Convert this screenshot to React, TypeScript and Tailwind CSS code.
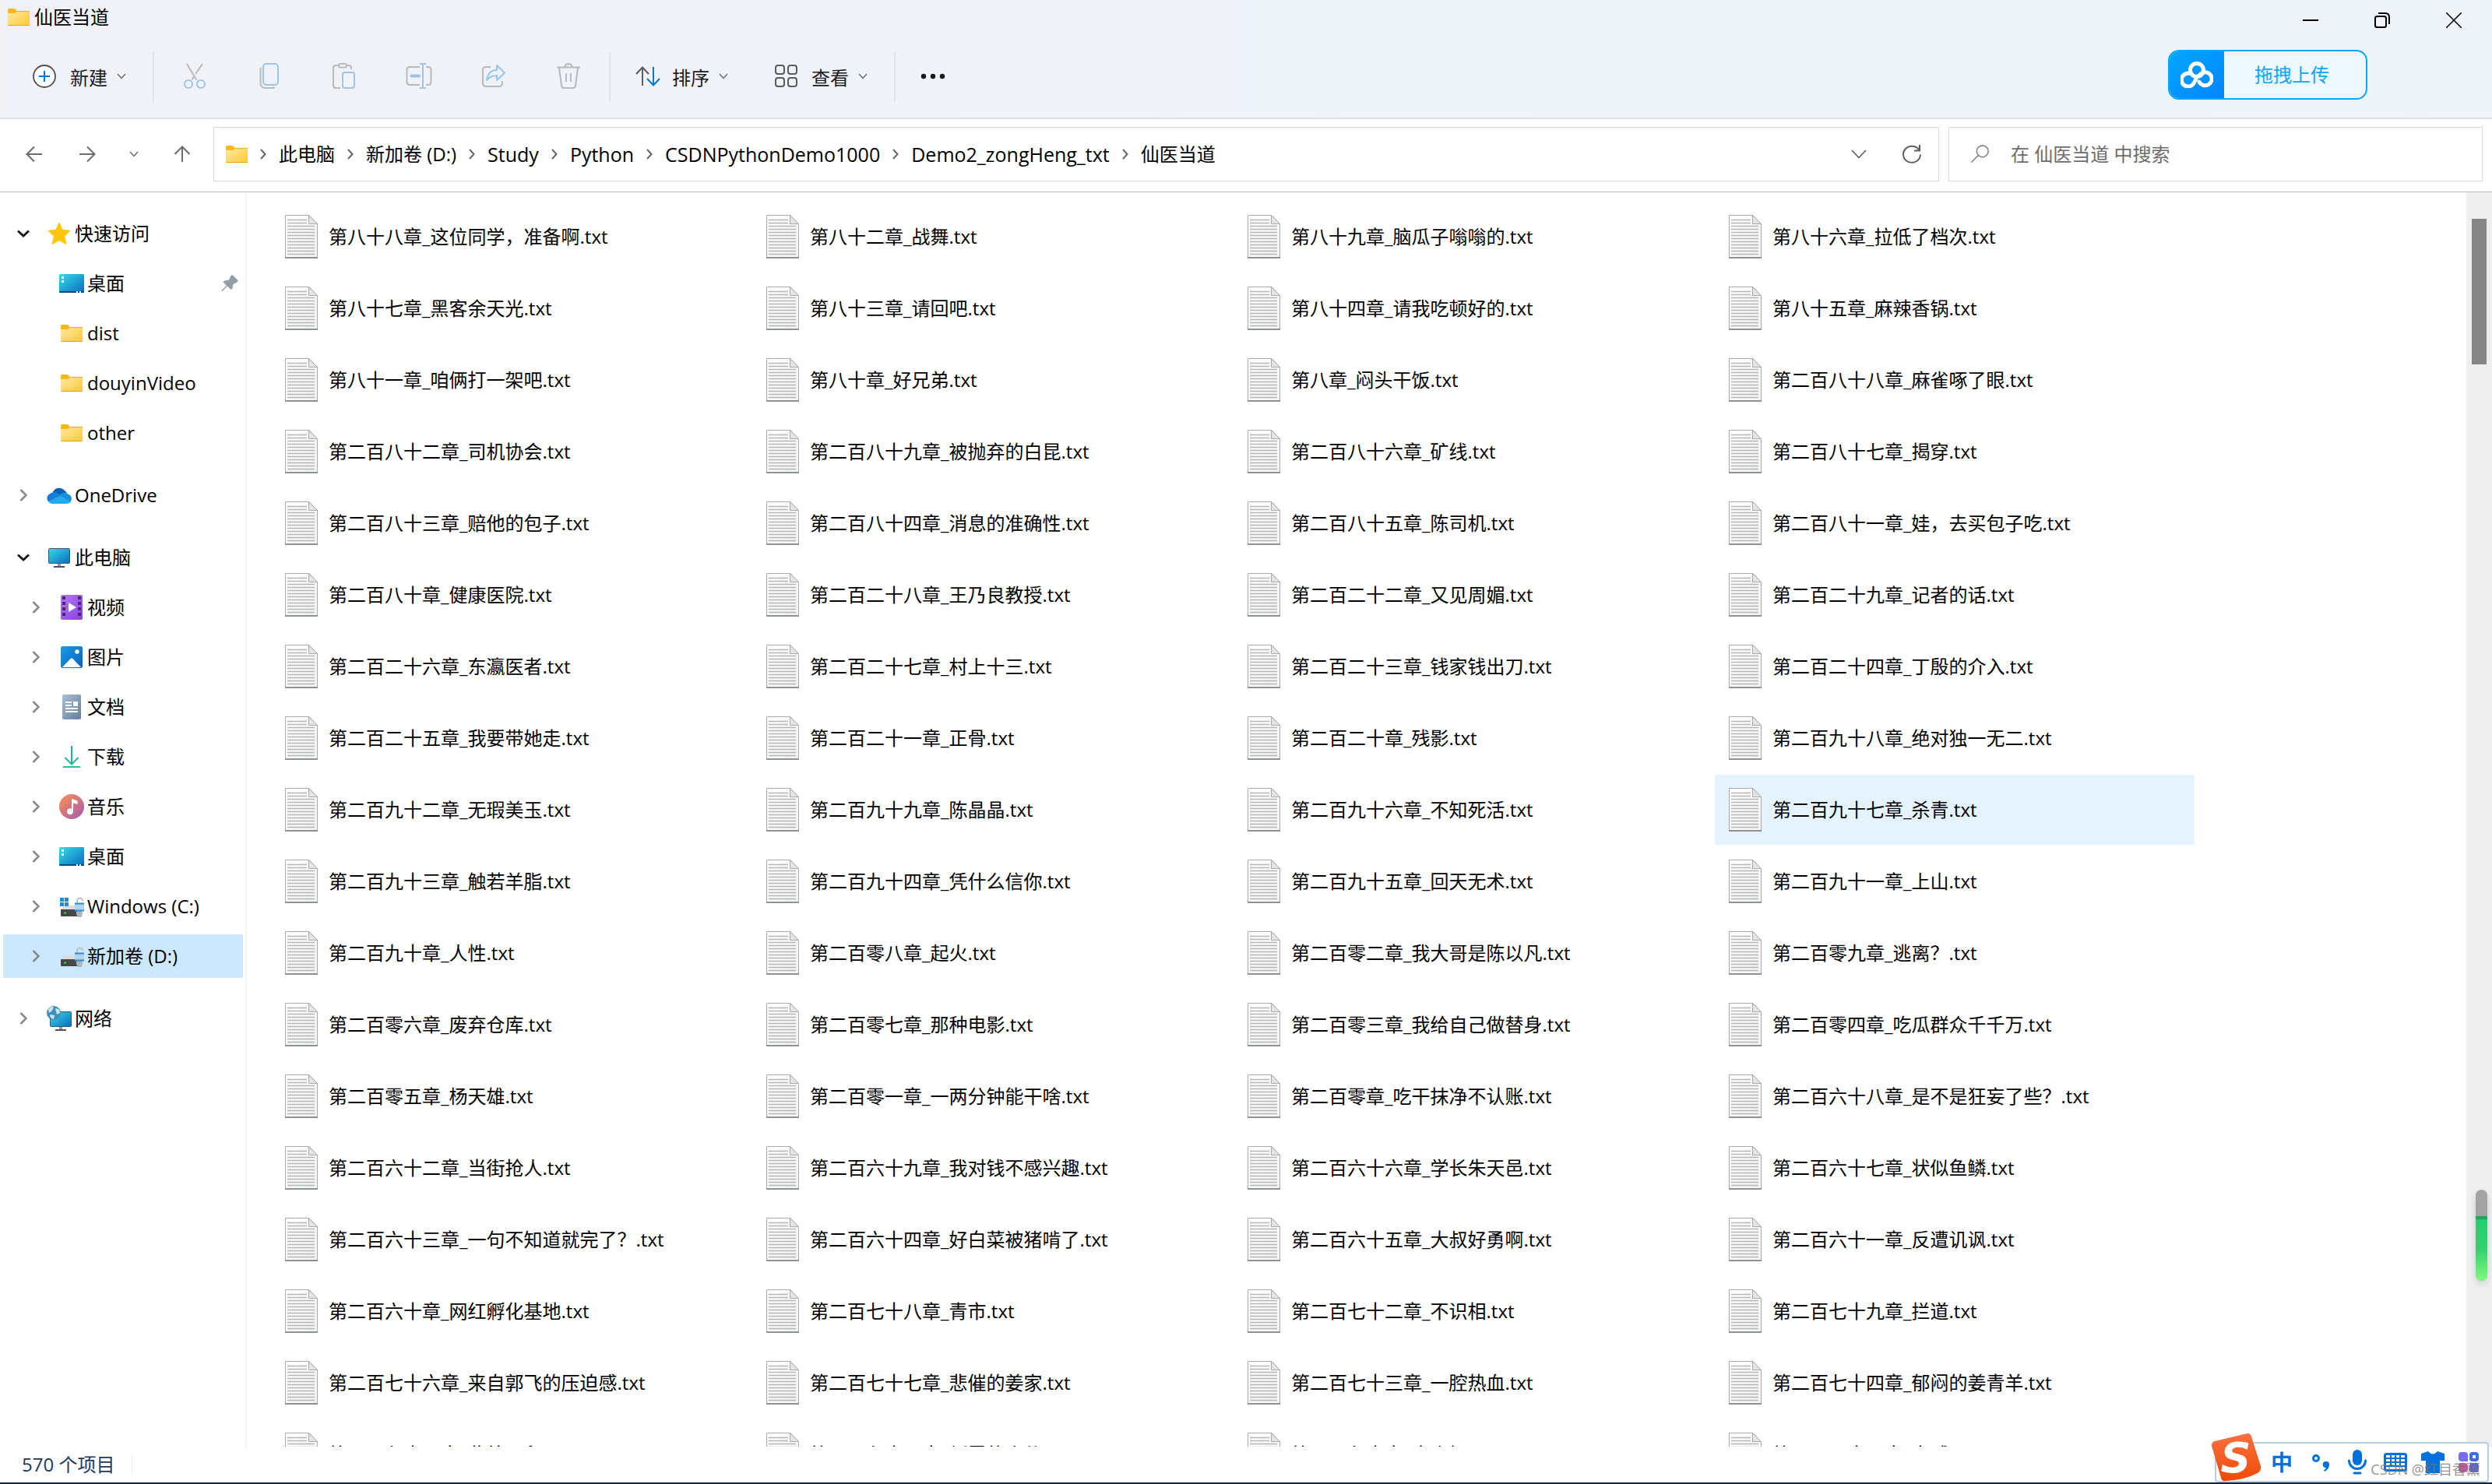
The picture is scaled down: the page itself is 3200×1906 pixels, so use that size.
import React from "react";

type IconProps = { className?: string };

const quickAccess = ["dist", "douyinVideo", "other"];

const crumbs = ["此电脑", "新加卷 (D:)", "Study", "Python", "CSDNPythonDemo1000", "Demo2_zongHeng_txt", "仙医当道"];

const hoveredFile = "第二百九十七章_杀青";

// four names per line, in the order the folder lists them
const files = [
  "第八十八章_这位同学，准备啊", "第八十二章_战舞", "第八十九章_脑瓜子嗡嗡的", "第八十六章_拉低了档次",
  "第八十七章_黑客余天光", "第八十三章_请回吧", "第八十四章_请我吃顿好的", "第八十五章_麻辣香锅",
  "第八十一章_咱俩打一架吧", "第八十章_好兄弟", "第八章_闷头干饭", "第二百八十八章_麻雀啄了眼",
  "第二百八十二章_司机协会", "第二百八十九章_被抛弃的白昆", "第二百八十六章_矿线", "第二百八十七章_揭穿",
  "第二百八十三章_赔他的包子", "第二百八十四章_消息的准确性", "第二百八十五章_陈司机", "第二百八十一章_娃，去买包子吃",
  "第二百八十章_健康医院", "第二百二十八章_王乃良教授", "第二百二十二章_又见周媚", "第二百二十九章_记者的话",
  "第二百二十六章_东瀛医者", "第二百二十七章_村上十三", "第二百二十三章_钱家钱出刀", "第二百二十四章_丁殷的介入",
  "第二百二十五章_我要带她走", "第二百二十一章_正骨", "第二百二十章_残影", "第二百九十八章_绝对独一无二",
  "第二百九十二章_无瑕美玉", "第二百九十九章_陈晶晶", "第二百九十六章_不知死活", "第二百九十七章_杀青",
  "第二百九十三章_触若羊脂", "第二百九十四章_凭什么信你", "第二百九十五章_回天无术", "第二百九十一章_上山",
  "第二百九十章_人性", "第二百零八章_起火", "第二百零二章_我大哥是陈以凡", "第二百零九章_逃离？",
  "第二百零六章_废弃仓库", "第二百零七章_那种电影", "第二百零三章_我给自己做替身", "第二百零四章_吃瓜群众千千万",
  "第二百零五章_杨天雄", "第二百零一章_一两分钟能干啥", "第二百零章_吃干抹净不认账", "第二百六十八章_是不是狂妄了些？",
  "第二百六十二章_当街抢人", "第二百六十九章_我对钱不感兴趣", "第二百六十六章_学长朱天邑", "第二百六十七章_状似鱼鳞",
  "第二百六十三章_一句不知道就完了？", "第二百六十四章_好白菜被猪啃了", "第二百六十五章_大叔好勇啊", "第二百六十一章_反遭讥讽",
  "第二百六十章_网红孵化基地", "第二百七十八章_青市", "第二百七十二章_不识相", "第二百七十九章_拦道",
  "第二百七十六章_来自郭飞的压迫感", "第二百七十七章_悲催的姜家", "第二百七十三章_一腔热血", "第二百七十四章_郁闷的姜青羊",
  "第二百七十五章_此处不留", "第二百七十一章_倒霉的小伙", "第二百七十章_大小姐", "第二百五十八章_立威",
];

const FolderIcon = ({ className = "" }: IconProps) => (
  <svg className={className} width="28" height="22" viewBox="0 0 28 22" aria-hidden="true">
    <defs>
      <linearGradient id="folder" x1="0" y1="0" x2="1" y2="1">
        <stop offset="0" stopColor="#ffe9a2" />
        <stop offset="1" stopColor="#ffc937" />
      </linearGradient>
    </defs>
    <path d="M0 1.500Q0 0 1.500 0H8.500L12 3V7H0Z" fill="#fbb815" />
    <path d="M0 6H9L12 3H27Q28 3 28 4V21Q28 22 27 22H1Q0 22 0 21Z" fill="url(#folder)" />
    <path d="M0 21H28V21Q28 22 27 22H1Q0 22 0 21Z" fill="#eba51d" />
    <path d="M12 3.500H28" stroke="#f0b030" />
  </svg>
);

const TextFileIcon = () => (
  <svg className="shrink-0" width="42" height="56" viewBox="0 0 42 56" aria-hidden="true">
    <defs>
      <linearGradient id="sheet" x1="0" y1="0" x2="1" y2="1">
        <stop offset="0" stopColor="#ffffff" />
        <stop offset="1" stopColor="#f1f2f3" />
      </linearGradient>
    </defs>
    <path d="M.5.5H31L41.500 11.500V55.500H.5Z" fill="url(#sheet)" stroke="#a9abac" />
    <path d="M30.500.5V11.500H41.500Z" fill="#e3e4e4" stroke="#a9abac" />
    <path d="M0 55H42" stroke="#8f9293" strokeWidth="2" />
    <path d="M3 6.500H28M3 10.500H28M3 14.500H38M3 18.500H38M3 22.500H38M3 26.500H38M3 30.500H38M3 34.500H38M3 38.500H38M3 42.500H38M3 46.500H38M3 50.500H38" stroke="#b3b5b6" strokeWidth="1.300" />
  </svg>
);

const DesktopIcon = () => (
  <svg width="32" height="24" viewBox="0 0 32 24" aria-hidden="true">
    <defs>
      <linearGradient id="screen" x1="0" y1="0" x2="1" y2="1">
        <stop offset="0" stopColor="#35dbe6" />
        <stop offset="1" stopColor="#0a6cc0" />
      </linearGradient>
    </defs>
    <rect width="32" height="24" rx="1.500" fill="url(#screen)" />
    <path d="M0 22H32V22.500Q32 24 30.500 24H1.500Q0 24 0 22.500Z" fill="#0c4a7c" />
    <path d="M3 3H6V6H3ZM3 8H6V11H3ZM22 22H24V24H22ZM26 22H28V24H26Z" fill="#fff" />
  </svg>
);

const StarIcon = () => (
  <svg width="30" height="30" viewBox="0 0 30 30" aria-hidden="true">
    <path d="M15 1.500L19 10.500L28.500 11.500L21.300 18L23.500 28L15 23L6.500 28L8.700 18L1.500 11.500L11 10.500Z" fill="#fec60a" stroke="#fec60a" strokeWidth="1.500" strokeLinejoin="round" />
  </svg>
);

const PinIcon = () => (
  <svg className="ml-auto" width="22" height="22" viewBox="0 0 22 22" aria-hidden="true">
    <path d="M12.500 1Q14 0 15.500 1L21 6.500Q22 8 20.500 9.500L15.500 12L14.500 17.500L12.500 19L8 14.500L1.500 21H.5V20L7 13.500L2.500 9.500L4.500 7.500L10 6.500Z" fill="#939fa7" />
  </svg>
);

const OneDriveIcon = () => (
  <svg width="32" height="21" viewBox="0 0 32 21" aria-hidden="true">
    <path d="M7 8C9 1 17-2 23 4L26 7L15 14Z" fill="#0a61b5" />
    <path d="M7 7C11 5 14 7 17 9L22 13L6 20C-2 19-1 8 7 7Z" fill="#0f7fd8" />
    <path d="M17 9.500C20 6 25 6 27 8.500C34 10 33 20 27 20.500Z" fill="#1490df" />
    <path d="M2.500 18L17 10.500L30.500 18Q29 21 25 21H7Q4 21 2.500 18Z" fill="#28a8ea" />
  </svg>
);

const PcIcon = () => (
  <svg width="28" height="25" viewBox="0 0 28 25" aria-hidden="true">
    <path d="M12 19H16V23H12Z" fill="#8f979e" />
    <path d="M7 23H21V25H7Z" fill="#4b545c" />
    <rect x=".5" y=".5" width="27" height="19" rx="1" fill="url(#screen)" stroke="#3f5967" />
  </svg>
);

const VideoIcon = () => (
  <svg width="28" height="32" viewBox="0 0 28 32" aria-hidden="true">
    <defs>
      <linearGradient id="film" x1="0" y1="0" x2="1" y2="1">
        <stop offset="0" stopColor="#b07af5" />
        <stop offset="1" stopColor="#8a3fe0" />
      </linearGradient>
    </defs>
    <rect width="28" height="32" rx="2" fill="url(#film)" />
    <path d="M4 2V30M24 2V30" stroke="#4b2477" strokeWidth="4" strokeDasharray="4 3" />
    <path d="M10 10V22L20 16Z" fill="#fff" />
  </svg>
);

const PictureIcon = () => (
  <svg width="28" height="28" viewBox="0 0 28 28" aria-hidden="true">
    <defs>
      <linearGradient id="sky" x1="0" y1="0" x2="1" y2="1">
        <stop offset="0" stopColor="#1c9be8" />
        <stop offset="1" stopColor="#0b62b8" />
      </linearGradient>
    </defs>
    <rect width="28" height="28" rx="2.500" fill="url(#sky)" />
    <path d="M2 27L12.500 16Q14 14.500 15.500 16L26 27Z" fill="#f3f9fe" />
    <circle cx="21" cy="7" r="2.700" fill="#fff" />
  </svg>
);

const DocumentIcon = () => (
  <svg width="24" height="32" viewBox="0 0 24 32" aria-hidden="true">
    <defs>
      <linearGradient id="doc" x1="0" y1="0" x2="1" y2="1">
        <stop offset="0" stopColor="#a9bfd3" />
        <stop offset="1" stopColor="#647f9e" />
      </linearGradient>
    </defs>
    <rect width="24" height="32" rx="2" fill="url(#doc)" />
    <path d="M4 10H12M4 14H12M4 18H20M4 22H20" stroke="#fff" strokeWidth="2" />
    <path d="M14 9H20V15H14Z" fill="#fff" />
  </svg>
);

const DownloadIcon = () => (
  <svg width="22" height="28" viewBox="0 0 22 28" fill="none" aria-hidden="true">
    <path d="M11 0V23M2.500 15L11 23.500L19.500 15" stroke="#1fb598" strokeWidth="2" />
    <path d="M0 27H22" stroke="#2fc08f" strokeWidth="2" />
  </svg>
);

const MusicIcon = () => (
  <svg width="32" height="32" viewBox="0 0 32 32" aria-hidden="true">
    <defs>
      <linearGradient id="disc" x1="0" y1="0" x2="1" y2="1">
        <stop offset=".1" stopColor="#f58b57" />
        <stop offset="1" stopColor="#a25bb5" />
      </linearGradient>
    </defs>
    <circle cx="16" cy="16" r="16" fill="url(#disc)" />
    <path d="M16 6L23.500 8.500V13L18 11.500V22A4 4 0 1 1 16 18.800Z" fill="#fff" />
  </svg>
);

const DriveIcon = ({ system = false }: { system?: boolean }) => (
  <svg width="32" height="32" viewBox="0 0 32 32" aria-hidden="true">
    <path d="M7 15H25L30 20H2Z" fill="#dcdcdc" />
    <path d="M2 20H29V28Q29 29 28 29H3Q2 29 2 28Z" fill="#474747" />
    <circle cx="7.500" cy="24.500" r="1.300" fill="#42e03b" />
    {system && <path d="M1 5H6V10H1ZM7 5H12V10H7ZM1 11H6V16H1ZM7 11H12V16H7Z" fill="#1a8fe0" />}
    <path d="M23 13V9A3.500 3.500 0 0 1 30 9" fill="none" stroke="#b9c3ca" strokeWidth="2.200" />
    <path d="M20 13H32V22H20Z" fill="#aed3ee" />
    <path d="M20 12.500H32M20 21.500H32" stroke="#2b8fdb" strokeWidth="2" />
    <path d="M22 22.500H30V26L28 30H24L22 26Z" fill="#aab4bb" />
  </svg>
);

const NetworkIcon = () => (
  <svg width="32" height="32" viewBox="0 0 32 32" aria-hidden="true">
    <path d="M16 26H20V30H16Z" fill="#8f979e" />
    <path d="M11 30H25V32H11Z" fill="#4b545c" />
    <rect x="4.500" y="7.500" width="27" height="19" rx="1" fill="url(#screen)" stroke="#3f5967" />
    <circle cx="9" cy="9" r="9" fill="#3d8fbe" />
    <path d="M2 4Q7-1 9 2L6 7L3 9ZM11 3Q17 3 17 9L13 11L12 7ZM4 11L10 12L9 17Q4 16 4 11Z" fill="#cfe5f0" />
  </svg>
);

const ArrowIcon = ({ className = "" }: IconProps) => (
  <svg className={className} width="24" height="24" viewBox="0 0 24 24" fill="none" stroke="#6b6b6b" strokeWidth="2" aria-hidden="true">
    <path d="M22 12H3M12 2.500L2.500 12L12 21.500" />
  </svg>
);

const SmallChevron = () => (
  <svg width="12" height="8" viewBox="0 0 12 8" fill="none" stroke="#666" strokeWidth="1.300" aria-hidden="true">
    <path d="M1 1L6 6.500L11 1" />
  </svg>
);

const CrumbChevron = () => (
  <svg width="8" height="14" viewBox="0 0 8 14" fill="none" stroke="#666" strokeWidth="2" aria-hidden="true">
    <path d="M1 1L6.500 7L1 13" />
  </svg>
);

const TreeChevron = ({ open = false }: { open?: boolean }) =>
  open ? (
    <svg width="16" height="10" viewBox="0 0 16 10" fill="none" stroke="#1a1a1a" strokeWidth="2.800" aria-hidden="true">
      <path d="M1 1.500L8 8L15 1.500" />
    </svg>
  ) : (
    <svg width="10" height="16" viewBox="0 0 10 16" fill="none" stroke="#8a8a8a" strokeWidth="2.600" aria-hidden="true">
      <path d="M1.500 1L8.500 8L1.500 15" />
    </svg>
  );

const Separator = ({ className = "" }: IconProps) => <div className={`h-16 w-0.5 bg-[#e1e4e9] ${className}`} />;

const toolIcons = [
  {
    label: "剪切",
    icon: (
      <>
        <path d="M6 1L18.500 22M26 1L17 14M15 17L12.500 21.500" />
        <g stroke="#98c6ec">
          <circle cx="8" cy="27" r="5" />
          <circle cx="24" cy="27" r="5" />
        </g>
      </>
    ),
  },
  {
    label: "复制",
    icon: (
      <>
        <path d="M5 6Q4.500 7 4.500 9V25Q4.500 32 11 32H19Q21.500 32 22.500 31" />
        <rect x="8" y="1" width="19" height="27" rx="4" stroke="#98c6ec" />
      </>
    ),
  },
  {
    label: "粘贴",
    icon: (
      <>
        <path d="M9 3H5Q2 3 2 6V29Q2 32 5 32H11M19 3H22Q25 3 25 6V8" />
        <rect x="9" y="1" width="10" height="4.500" rx="2" />
        <rect x="14" y="12" width="15" height="20" rx="3" stroke="#98c6ec" />
      </>
    ),
  },
  {
    label: "重命名",
    icon: (
      <>
        <path d="M17 5H4Q0.500 5 0.500 9V24Q0.500 28 4 28H17M25 5H28Q31.500 5 31.500 9V24Q31.500 28 28 28H25" />
        <path d="M17 1H25M21 1V32M17 32H25" stroke="#98c6ec" />
        <path d="M6.500 16.500H16" stroke="#98c6ec" strokeWidth="4" strokeLinecap="round" />
      </>
    ),
  },
  {
    label: "共享",
    icon: (
      <>
        <path d="M12 5H6Q2 5 2 9V26Q2 30 6 30H23Q27 30 27 26V23" />
        <path d="M7 22Q9 9 20 9V3L30 12.500L20 22V16Q12 16 7 22Z" stroke="#98c6ec" strokeLinejoin="round" />
      </>
    ),
  },
  {
    label: "删除",
    icon: (
      <path d="M1 5.500H31M11 5.500Q12 1 16 1T21 5.500M4 5.500L7 29Q7.500 32 10 32H22Q24.500 32 25 29L28 5.500M13 13V24M19 13V24" />
    ),
  },
];

type TreeRowProps = {
  icon: React.ReactNode;
  label: string;
  level?: number;
  state?: "open" | "closed" | "none";
  pinned?: boolean;
  selected?: boolean;
};

const TreeRow = ({ icon, label, level = 1, state = "none", pinned, selected }: TreeRowProps) => (
  <button
    className={`flex h-14 w-full items-center rounded-xs pr-[6px] text-left whitespace-nowrap ${
      level === 1 ? "pl-4" : "pl-8"
    } ${selected ? "bg-[#cce8ff]" : ""}`}
  >
    <span className="flex w-5 shrink-0 justify-center">{state !== "none" && <TreeChevron open={state === "open"} />}</span>
    <span className="ml-5 flex w-8 shrink-0 justify-center">{icon}</span>
    <span className="ml-1">{label}</span>
    {pinned && <PinIcon />}
  </button>
);

const Sidebar = () => (
  <nav className="flex w-[317px] shrink-0 flex-col gap-6 border-r-2 border-[#f5f5f5] pt-[25px] pr-[3px] pl-1">
    <div className="flex flex-col gap-2">
      <TreeRow icon={<StarIcon />} label="快速访问" state="open" />
      <TreeRow icon={<DesktopIcon />} label="桌面" level={2} pinned />
      {quickAccess.map((name) => (
        <TreeRow key={name} icon={<FolderIcon />} label={name} level={2} />
      ))}
    </div>
    <TreeRow icon={<OneDriveIcon />} label="OneDrive" state="closed" />
    <div className="flex flex-col gap-2">
      <TreeRow icon={<PcIcon />} label="此电脑" state="open" />
      <TreeRow icon={<VideoIcon />} label="视频" level={2} state="closed" />
      <TreeRow icon={<PictureIcon />} label="图片" level={2} state="closed" />
      <TreeRow icon={<DocumentIcon />} label="文档" level={2} state="closed" />
      <TreeRow icon={<DownloadIcon />} label="下载" level={2} state="closed" />
      <TreeRow icon={<MusicIcon />} label="音乐" level={2} state="closed" />
      <TreeRow icon={<DesktopIcon />} label="桌面" level={2} state="closed" />
      <TreeRow icon={<DriveIcon system />} label="Windows (C:)" level={2} state="closed" />
      <TreeRow icon={<DriveIcon />} label="新加卷 (D:)" level={2} state="closed" selected />
    </div>
    <TreeRow icon={<NetworkIcon />} label="网络" state="closed" />
  </nav>
);

const Header = () => (
  <header className="border-b-2 border-[#dcdfe5] bg-linear-to-r from-[#f1f2f7] via-[#eff3fb] to-[#eef4f9]">
    {/* Title bar */}
    <div className="flex h-12 items-center pb-1 pl-[10px]">
      <FolderIcon />
      <h1 className="ml-[6px]">仙医当道</h1>
      <div className="ml-auto flex h-full pt-2 pr-[3px]">
        <button aria-label="最小化" className="flex w-[92px] items-center justify-center">
          <svg width="20" height="20" viewBox="0 0 20 20"><path d="M0 10H20" stroke="#000" strokeWidth="2" /></svg>
        </button>
        <button aria-label="还原" className="flex w-[92px] items-center justify-center">
          <svg width="20" height="20" viewBox="0 0 20 20" fill="none" stroke="#000" strokeWidth="2">
            <rect x="1" y="5" width="14" height="14" rx="2.500" />
            <path d="M5 1H14Q19 1 19 6V15" />
          </svg>
        </button>
        <button aria-label="关闭" className="flex w-[92px] items-center justify-center">
          <svg width="20" height="20" viewBox="0 0 20 20"><path d="M0 0L20 20M20 0L0 20" stroke="#000" strokeWidth="1.500" /></svg>
        </button>
      </div>
    </div>

    {/* Toolbar */}
    <div className="flex h-[103px] items-center pb-1 pl-[42px] text-[#1b1b1b]">
      <button className="flex items-center">
        <svg width="30" height="30" viewBox="0 0 30 30" fill="none">
          <circle cx="15" cy="15" r="14" fill="#fafbfc" stroke="#505050" strokeWidth="1.800" />
          <path d="M15 8V22M8 15H22" stroke="#0078d4" strokeWidth="2" />
        </svg>
        <span className="mr-3 ml-[18px] pt-1">新建</span>
        <SmallChevron />
      </button>
      <Separator className="mr-1 ml-[34px]" />
      {toolIcons.map((tool) => (
        <button key={tool.label} aria-label={tool.label} className="flex w-24 justify-center">
          <svg className="overflow-visible" width="32" height="33" viewBox="0 0 32 33" fill="none" stroke="#b9babd" strokeWidth="2">
            {tool.icon}
          </svg>
        </button>
      ))}
      <Separator className="mr-8 ml-1" />
      <button className="flex items-center">
        <svg width="32" height="26" viewBox="0 0 32 26" fill="none" strokeWidth="2">
          <path d="M9 25V2M1 10L9 1.500L17 10" stroke="#5c5c5c" />
          <path d="M23 1V24M15 16L23 24.500L31 16" stroke="#0078d4" />
        </svg>
        <span className="mr-3 ml-[15px] pt-1">排序</span>
        <SmallChevron />
      </button>
      <button className="ml-[60px] flex items-center">
        <svg width="29" height="29" viewBox="0 0 29 29" fill="none" stroke="#5c5c5c" strokeWidth="2">
          <rect x="1" y="1" width="11" height="11" rx="3" />
          <rect x="17" y="1" width="11" height="11" rx="3" />
          <rect x="1" y="17" width="11" height="11" rx="3" />
          <rect x="17" y="17" width="11" height="11" rx="3" />
        </svg>
        <span className="mr-3 ml-[18px] pt-1">查看</span>
        <SmallChevron />
      </button>
      <Separator className="mr-8 ml-[34px]" />
      <button aria-label="更多">
        <svg width="32" height="8" viewBox="0 0 32 8" fill="#1b1b1b">
          <circle cx="4" cy="4" r="3.200" />
          <circle cx="16" cy="4" r="3.200" />
          <circle cx="28" cy="4" r="3.200" />
        </svg>
      </button>

      <button className="mr-40 mb-1 ml-auto flex h-16 w-64 items-center overflow-hidden rounded-[14px] border-2 border-[#06a7ff] bg-[#eef8ff] text-[#06a7ff]">
        <span className="flex h-full w-[70px] items-center justify-center bg-linear-to-br from-[#06a7ff] to-[#0683ff]">
          <svg width="42" height="34" viewBox="0 0 42 34" fill="none" stroke="#fff" strokeWidth="5">
            <circle cx="21" cy="11" r="8.500" />
            <path d="M21 20L17 28A8.500 8.500 0 1 1 14.500 16.500M21 20L25 17A8.500 8.500 0 1 1 24 26" strokeLinecap="round" />
          </svg>
        </span>
        <span className="flex-1 pr-2 text-center">拖拽上传</span>
      </button>
    </div>
  </header>
);

const AddressRow = () => (
  <div className="flex h-[94px] items-center border-b border-[#bfbfbf] pr-3 pb-1 pl-8">
    <button aria-label="后退"><ArrowIcon /></button>
    <button aria-label="前进" className="ml-11"><ArrowIcon className="rotate-180" /></button>
    <button aria-label="最近浏览的位置" className="ml-[42px]"><SmallChevron /></button>
    <button aria-label="上移" className="ml-11"><ArrowIcon className="rotate-90" /></button>

    <div className="ml-7 flex h-[70px] min-w-0 flex-1 items-center border border-[#d9d9d9] pr-[22px] pl-[15px] whitespace-nowrap">
      <FolderIcon />
      <ol className="flex items-center">
        {crumbs.map((crumb) => (
          <li key={crumb} className="ml-4 flex items-center gap-4">
            <CrumbChevron />
            <a href="#" className={/^[\x20-\x7e]+$/.test(crumb) ? "text-[25px] leading-8" : ""}>
              {crumb}
            </a>
          </li>
        ))}
      </ol>
      <button aria-label="以前的位置" className="ml-auto">
        <svg width="20" height="12" viewBox="0 0 20 12" fill="none" stroke="#666" strokeWidth="1.800"><path d="M1 1L10 10.500L19 1" /></svg>
      </button>
      <button aria-label="刷新" className="ml-[46px]">
        <svg width="24" height="24" viewBox="0 0 24 24" fill="none" stroke="#5f5f5f" strokeWidth="2">
          <path d="M21.500 7A11 10.500 0 1 0 23 12.500M22 0V7.500H15" />
        </svg>
      </button>
    </div>

    <label className="ml-3 flex h-[70px] w-[686px] items-center border border-[#d9d9d9] pl-7">
      <svg width="25" height="25" viewBox="0 0 25 25" fill="none" stroke="#7a7a7a" strokeWidth="1.600" aria-hidden="true">
        <circle cx="16" cy="9" r="8" />
        <path d="M10.500 14.500L.5 24.500" />
      </svg>
      <input
        type="search"
        aria-label="搜索"
        placeholder="在 仙医当道 中搜索"
        className="ml-7 w-full outline-none placeholder:text-[#6d6d6d]"
      />
    </label>
  </div>
);

const InputMethodBar = () => (
  <div className="absolute right-1 bottom-0.5 flex h-[52px] w-[352px] items-center rounded-sm border-2 border-[#b9cde2] bg-white pl-[70px]">
    <svg className="absolute bottom-0 -left-1.5 overflow-visible" width="64" height="61" viewBox="0 0 64 61">
      <defs>
        <linearGradient id="sogou" x1="0" y1="0" x2="0" y2="1">
          <stop offset="0" stopColor="#fa7040" />
          <stop offset="1" stopColor="#f04a05" />
        </linearGradient>
      </defs>
      <path d="M4 10L46 0Q50 0 51 4L63 42Q64 48 59 51Q42 60 18 61Q13 62 12 57L0 16Q0 11 4 10Z" fill="url(#sogou)" />
      <text x="31" y="50" textAnchor="middle" fill="#fff" fontSize="54" fontWeight="700" fontStyle="italic" fontFamily="DejaVu Sans">S</text>
    </svg>
    <span className="w-[30px] text-[28px] leading-8 font-bold text-[#0070dc]">中</span>
    <svg className="ml-[22px]" width="24" height="24" viewBox="0 0 24 24" fill="#0070dc">
      <circle cx="6" cy="7" r="3.500" fill="none" stroke="#0070dc" strokeWidth="3" />
      <path d="M19 11A4 4 0 0 1 23 15Q23 21 17 24L16 22.500Q19 20.500 18.500 19A4 4 0 0 1 19 11Z" />
    </svg>
    <svg className="ml-[23px]" width="24" height="32" viewBox="0 0 24 32" fill="#0070dc">
      <rect x="6" y="0" width="12" height="20" rx="6" />
      <path d="M1.500 14A10.500 10.500 0 0 0 22.500 14M8 30H16" fill="none" stroke="#0070dc" strokeWidth="3" strokeLinecap="round" />
    </svg>
    <svg className="ml-[22px]" width="30" height="24" viewBox="0 0 30 24" fill="none" stroke="#0070dc">
      <rect x="1.500" y="1.500" width="27" height="21" rx="2" strokeWidth="3" />
      <path d="M9 2V17M15 2V17M21 2V17M2 7H28M2 12H28M2 17H28" strokeWidth="2" />
    </svg>
    <svg className="ml-[18px]" width="30" height="28" viewBox="0 0 30 28" fill="#0070dc">
      <path d="M9 0Q15 7 21 0L30 3V12H24V28H6V12H0V3Z" />
    </svg>
    <svg className="ml-[18px]" width="26" height="26" viewBox="0 0 26 26">
      <path d="M4 0H8Q12 0 12 4V12H4Q0 12 0 8V4Q0 0 4 0Z" fill="#7a6bf5" />
      <rect x="16" y="2" width="8" height="8" rx="2" fill="none" stroke="#3f6cf5" strokeWidth="4" />
      <rect x="0" y="14" width="12" height="12" rx="4" fill="#c25a9b" />
      <rect x="14" y="14" width="12" height="12" rx="4" fill="#5b5fe8" />
    </svg>
    <span className="absolute right-[9px] bottom-[3px] text-[18px] leading-6 whitespace-nowrap text-[#777777]/80">CSDN @红目香薰</span>
  </div>
);

const App = () => (
  <div
    lang="zh-CN"
    className="relative flex h-screen flex-col overflow-hidden bg-white font-['Open_Sans','Noto_Sans_CJK_SC',sans-serif] text-[24px] leading-8 text-black"
  >
    <Header />
    <AddressRow />

    <div className="flex min-h-0 flex-1">
      <Sidebar />
      <main className="min-w-0 flex-1 overflow-hidden pt-3 pl-[31px]">
        <ul className="grid grid-cols-[repeat(4,616px)] gap-0.5">
          {files.map((name) => (
            <li
              key={name}
              className={`flex h-[90px] items-center gap-[14px] rounded-xs pl-[18px] whitespace-nowrap ${
                name === hoveredFile ? "bg-[#e5f3ff]" : ""
              }`}
            >
              <TextFileIcon />
              <span>{name}.txt</span>
            </li>
          ))}
        </ul>
      </main>
      {/* Scrollbar */}
      <div className="w-[33px] shrink-0 bg-[#efefef] pt-[34px] pl-[7px]">
        <div className="h-[187px] w-[19px] bg-[#868686]" />
      </div>
    </div>

    <footer className="flex h-12 items-center border-b-2 border-[#14243a] pl-7 text-[#1e395b]">
      <span>570 个项目</span>
      <div className="ml-[22px] h-6 w-px bg-[#ededed]" />
    </footer>

    {/* Floating memory gauge */}
    <div className="absolute right-[6px] bottom-[261px] h-[117px] w-[15px] overflow-hidden rounded-full bg-[#a3a3a3] shadow-[0_4px_10px_rgba(0,0,0,0.15)]">
      <div className="mt-[34px] h-[83px] border-t-4 border-[#1cab5c] bg-linear-to-b from-[#1fcf72] via-[#2fd36f] to-[#7dfa80]" />
    </div>

    <InputMethodBar />
  </div>
);

export default App;
